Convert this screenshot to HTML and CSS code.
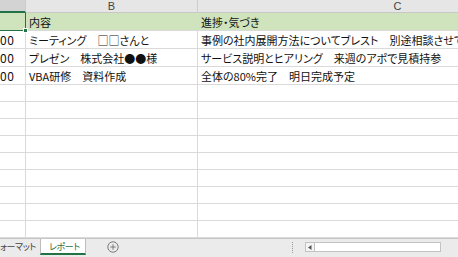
FILE: index.html
```html
<!DOCTYPE html>
<html lang="ja">
<head>
<meta charset="utf-8">
<link rel="stylesheet" href="styles.css">
</head>
<body>
<div class="app">
  <div class="grid">
    <div class="row hdr">
      <div class="c a selhdr"></div><div class="c b">B</div><div class="c cc">C</div>
    </div>
    <div class="row r18 green">
      <div class="c a selcell"><span class="handle"></span></div><div class="c b">内容</div><div class="c cc">進捗・気づき</div>
    </div>
    <div class="row r18">
      <div class="c a num">00</div><div class="c b">ミーティング　□□さんと</div><div class="c cc">事例の社内展開方法についてブレスト　別途相談させて</div>
    </div>
    <div class="row r18">
      <div class="c a num">00</div><div class="c b">プレゼン　株式会社●●様</div><div class="c cc">サービス説明とヒアリング　来週のアポで見積持参</div>
    </div>
    <div class="row r18">
      <div class="c a num">00</div><div class="c b">VBA研修　資料作成</div><div class="c cc">全体の80%完了　明日完成予定</div>
    </div>
    <div class="row"><div class="c a"></div><div class="c b"></div><div class="c cc"></div></div>
    <div class="row"><div class="c a"></div><div class="c b"></div><div class="c cc"></div></div>
    <div class="row"><div class="c a"></div><div class="c b"></div><div class="c cc"></div></div>
    <div class="row"><div class="c a"></div><div class="c b"></div><div class="c cc"></div></div>
    <div class="row"><div class="c a"></div><div class="c b"></div><div class="c cc"></div></div>
    <div class="row"><div class="c a"></div><div class="c b"></div><div class="c cc"></div></div>
    <div class="row"><div class="c a"></div><div class="c b"></div><div class="c cc"></div></div>
    <div class="row"><div class="c a"></div><div class="c b"></div><div class="c cc"></div></div>
    <div class="row"><div class="c a"></div><div class="c b"></div><div class="c cc"></div></div>
  </div>
  <div class="tabs">
    <div class="tab inactive">ォーマット</div>
    <div class="tab active">レポート</div>
    <div class="add">
      <svg width="12" height="12" viewBox="0 0 12 12"><circle cx="6" cy="6" r="5.2" fill="none" stroke="#7a7a7a" stroke-width="1"/><path d="M6 3.3v5.4M3.3 6h5.4" stroke="#7a7a7a" stroke-width="1"/></svg>
    </div>
    <div class="spacer"></div>
    <div class="grip"></div>
    <div class="hscroll">
      <div class="arrow"><svg width="4" height="5" viewBox="0 0 4 5"><path d="M3.5 0v5L0 2.5z" fill="#555"/></svg></div>
      <div class="track"></div>
    </div>
  </div>
</div>
</body>
</html>
```
FILE: styles.css
```css
html, body {
  margin: 0;
  padding: 0;
  background: #ffffff;
}
.app {
  width: 458px;
  height: 257px;
  overflow: hidden;
  display: flex;
  flex-direction: column;
  font-family: "Noto Sans CJK JP", "Noto Sans", sans-serif;
  font-feature-settings: "palt";
  color: #111;
}
.grid {
  height: 238px;
  overflow: hidden;
  flex: none;
}
.row {
  display: flex;
  height: 17px;
}
.r18 {
  height: 18px;
}
.c {
  box-sizing: border-box;
  border-right: 1px solid #dadada;
  border-bottom: 1px solid #dadada;
  flex: none;
  white-space: nowrap;
  overflow: hidden;
  font-size: 11px;
  line-height: 18px;
  padding-left: 3px;
  position: relative;
}
.a {
  width: 26px;
  padding-left: 0;
}
.b {
  width: 172px;
}
.cc {
  width: 400px;
  padding-left: 3px;
}
.hdr {
  height: 13px;
}
.hdr .c {
  background: #e6e6e6;
  border-right: 1px solid #cdcdcd;
  border-bottom: 1px solid #c8c8c8;
  font-family: "Liberation Sans", sans-serif;
  font-size: 11px;
  line-height: 12px;
  color: #444;
  text-align: center;
  padding: 0;
}
.hdr .selhdr {
  background: #d3d3d3;
  border-bottom: 2px solid #217346;
}
.green .c {
  background: #cfe3bc;
}
.green .selcell {
  border-right: 1px solid #217346;
  border-bottom: 1px solid #217346;
}
.handle {
  position: absolute;
  right: -3px;
  bottom: -3px;
  width: 5px;
  height: 5px;
  background: #217346;
  border: 1px solid #fff;
  box-sizing: border-box;
  z-index: 2;
}
.green .a {
  overflow: visible;
}
.num {
  font-size: 12px;
  letter-spacing: 0.5px;
}
.tabs {
  flex: 1;
  display: flex;
  align-items: stretch;
  background: #ebebeb;
  border-top: 1px solid #c6c6c6;
  box-sizing: border-box;
  font-size: 9px;
  letter-spacing: -0.4px;
}
.tab {
  line-height: 16px;
  white-space: nowrap;
  overflow: hidden;
}
.inactive {
  width: 40px;
  color: #444;
  padding-left: 0;
}
.active {
  width: 46px;
  box-sizing: border-box;
  background: #fff;
  color: #217346;
  border-left: 1px solid #bdbdbd;
  border-right: 1px solid #bdbdbd;
  padding-left: 8px;
  height: 16px;
  line-height: 15px;
  border-bottom: 2px solid #217346;
}
.add {
  width: 54px;
  display: flex;
  align-items: center;
  justify-content: center;
  padding-bottom: 2px;
}
.spacer {
  flex: 1;
}
.grip {
  width: 0;
  border-left: 1px dotted #999;
  margin: 3px 12px 4px 0;
}
.hscroll {
  display: flex;
  align-items: stretch;
  margin: 3px 17px 5px 0;
  width: 136px;
  border: 1px solid #c3c3c3;
  background: #fff;
  box-sizing: border-box;
}
.arrow {
  width: 8px;
  display: flex;
  align-items: center;
  justify-content: center;
  border-right: 1px solid #c3c3c3;
  background: #f4f4f4;
}
.track {
  flex: 1;
}
```
